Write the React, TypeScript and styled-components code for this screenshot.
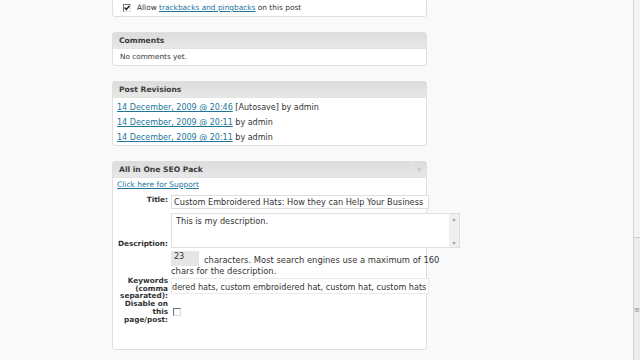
import { FC } from 'react';
import styled, { createGlobalStyle } from 'styled-components';

const GlobalStyle = createGlobalStyle`
  html, body {
    margin: 0;
    padding: 0;
    background: #f9f9f9;
  }
  body {
    font-family: "DejaVu Sans", Verdana, sans-serif;
    color: #333;
    overflow: hidden;
  }
`;

const revisions = [
  { date: '14 December, 2009 @ 20:46', note: '[Autosave] by admin' },
  { date: '14 December, 2009 @ 20:11', note: 'by admin' },
  { date: '14 December, 2009 @ 20:11', note: 'by admin' },
];

const CheckBox: FC<{ checked?: boolean }> = ({ checked }) => (
  <Box>
    {checked && (
      <svg width="6" height="6" viewBox="0 0 6 6">
        <path d="M0.5 2.5 L2.3 4.4 L5.6 0.8" fill="none" stroke="#222" strokeWidth="1.4" />
      </svg>
    )}
  </Box>
);

export default function App() {
  return (
    <Page>
      <GlobalStyle />
      <Content>
        <Column>
          <Panel $top>
            <TopBody>
              <CheckBox checked />
              <SmallText>
                Allow <Link>trackbacks and pingbacks</Link> on this post
              </SmallText>
            </TopBody>
          </Panel>

          <Panel>
            <Header>Comments</Header>
            <CommentsBody>No comments yet.</CommentsBody>
          </Panel>

          <Panel>
            <Header>Post Revisions</Header>
            <RevisionList>
              {revisions.map((r, i) => (
                <Revision key={i}>
                  <Link>{r.date}</Link> {r.note}
                </Revision>
              ))}
            </RevisionList>
          </Panel>

          <Panel>
            <Header>
              All in One SEO Pack
              <Toggle>▾</Toggle>
            </Header>
            <SeoBody>
              <SupportLink>Click here for Support</SupportLink>
              <Form>
                <Label $align="center">Title:</Label>
                <TextInput>Custom Embroidered Hats: How they can Help Your Business</TextInput>

                <Label $align="end">Description:</Label>
                <TextArea>
                  <AreaText>This is my description.</AreaText>
                  <AreaScroll>
                    <span>▴</span>
                    <span>▾</span>
                  </AreaScroll>
                </TextArea>

                <span />
                <Counter>
                  <CountRow>
                    <CountBox>23</CountBox>
                    <CountText>characters. Most search engines use a maximum of 160</CountText>
                  </CountRow>
                  <CountTail>chars for the description.</CountTail>
                </Counter>

                <Label $align="start">
                  Keywords
                  <br />
                  (comma
                  <br />
                  separated):
                </Label>
                <KeywordsInput>dered hats, custom embroidered hat, custom hat, custom hats</KeywordsInput>

                <Label $align="start">
                  Disable on
                  <br />
                  this
                  <br />
                  page/post:
                </Label>
                <DisableCell>
                  <CheckBox />
                </DisableCell>
              </Form>
            </SeoBody>
          </Panel>
        </Column>
      </Content>
      <ScrollTrack>
        <Thumb>
          <Grip>≡</Grip>
        </Thumb>
      </ScrollTrack>
    </Page>
  );
}

const Page = styled.div`
  display: flex;
  width: 640px;
  height: 360px;
  overflow: hidden;
  background: #f9f9f9;
`;

const Content = styled.div`
  flex: 1;
  padding-left: 112px;
`;

const Column = styled.div`
  display: flex;
  flex-direction: column;
  gap: 15px;
  width: 315px;
`;

const Panel = styled.div<{ $top?: boolean }>`
  box-sizing: border-box;
  background: #fff;
  border: 1px solid #dfdfdf;
  border-radius: 3px;
  margin-top: ${(p) => (p.$top ? '-10px' : '0')};
`;

const Header = styled.div`
  display: flex;
  align-items: center;
  justify-content: space-between;
  height: 15px;
  padding: 0 0 0 6px;
  background: linear-gradient(to bottom, #dcdcdc, #e8e8e8);
  border-bottom: 1px solid #e3e3e3;
  font-weight: bold;
  font-size: 7.6px;
  color: #3c3c3c;
`;

const Toggle = styled.span`
  width: 14px;
  height: 15px;
  display: flex;
  align-items: center;
  justify-content: center;
  font-size: 7px;
  color: #c2c2c2;
  border-left: 1px solid #e6e6e6;
`;

const Link = styled.a`
  color: #21759b;
  text-decoration: underline;
`;

const SmallText = styled.span`
  font-size: 7.4px;
`;

const TopBody = styled.div`
  display: flex;
  align-items: flex-start;
  gap: 6px;
  height: 25px;
  box-sizing: border-box;
  padding: 13px 0 0 10px;
  line-height: 8px;
`;

const Box = styled.span`
  display: inline-flex;
  align-items: center;
  justify-content: center;
  box-sizing: border-box;
  width: 8px;
  height: 8px;
  background: #fff;
  border: 1px solid;
  border-color: #707070 #dcdcdc #dcdcdc #707070;
`;

const CommentsBody = styled.div`
  height: 16px;
  line-height: 16px;
  padding-left: 7px;
  font-size: 7.3px;
`;

const RevisionList = styled.div`
  padding: 2px 0 0 4px;
`;

const Revision = styled.div`
  height: 15px;
  line-height: 15px;
  font-size: 8px;
`;

const SeoBody = styled.div`
  padding: 0 0 26px 4px;
`;

const SupportLink = styled(Link)`
  display: block;
  font-size: 7.5px;
  line-height: 13px;
`;

const Form = styled.div`
  display: grid;
  grid-template-columns: 51px auto;
  column-gap: 3px;
  align-items: start;
`;

const Label = styled.div<{ $align: 'start' | 'center' | 'end' }>`
  align-self: ${(p) => p.$align};
  text-align: right;
  font-weight: bold;
  font-size: 7.3px;
  line-height: 7.7px;
  color: #333;
  white-space: nowrap;
`;

const Field = styled.div`
  box-sizing: border-box;
  background: #fff;
  border: 1px solid #dfdfdf;
  font-size: 8.2px;
  white-space: nowrap;
  overflow: hidden;
`;

const TextInput = styled(Field)`
  width: 258px;
  height: 14px;
  margin-top: 4px;
  padding-left: 2px;
  line-height: 12px;
`;

const TextArea = styled(Field)`
  display: flex;
  width: 289px;
  height: 35px;
  margin-top: 4px;
`;

const AreaText = styled.div`
  flex: 1;
  padding: 2px 0 0 4px;
  line-height: 10px;
`;

const AreaScroll = styled.div`
  width: 10px;
  display: flex;
  flex-direction: column;
  justify-content: space-between;
  align-items: center;
  background: #efefef;
  color: #9a9a9a;
  font-size: 6px;
  line-height: 9px;
`;

const Counter = styled.div`
  margin-top: 3px;
  font-size: 8.4px;
`;

const CountRow = styled.div`
  display: flex;
  align-items: flex-start;
  gap: 5px;
  height: 15px;
  white-space: nowrap;
`;

const CountBox = styled.span`
  box-sizing: border-box;
  width: 28px;
  height: 15px;
  padding: 0 0 0 3px;
  background: #e6e6e6;
  font-size: 8px;
  line-height: 12px;
`;

const CountText = styled.span`
  padding-top: 4px;
  line-height: 11px;
`;

const CountTail = styled.div`
  line-height: 10px;
  margin-bottom: 1px;
`;

const KeywordsInput = styled(Field)`
  width: 258px;
  height: 16px;
  margin-top: 1px;
  padding-top: 1px;
  line-height: 14px;
  font-size: 8.1px;
  border-color: #ebebeb;
`;

const DisableCell = styled.div`
  align-self: center;
  padding-left: 2px;
  display: flex;
`;

const ScrollTrack = styled.div`
  width: 6px;
  height: 360px;
  border-left: 1px solid #d2d2d2;
  background: #f3f3f3;
  display: flex;
  flex-direction: column;
`;

const Thumb = styled.div`
  margin-top: 237px;
  flex: 1;
  box-sizing: border-box;
  padding-top: 68px;
  border-top: 1px solid #cfcfcf;
  background: #ececec;
  display: flex;
  justify-content: center;
`;

const Grip = styled.span`
  font-size: 7px;
  line-height: 8px;
  color: #8a8a8a;
`;
